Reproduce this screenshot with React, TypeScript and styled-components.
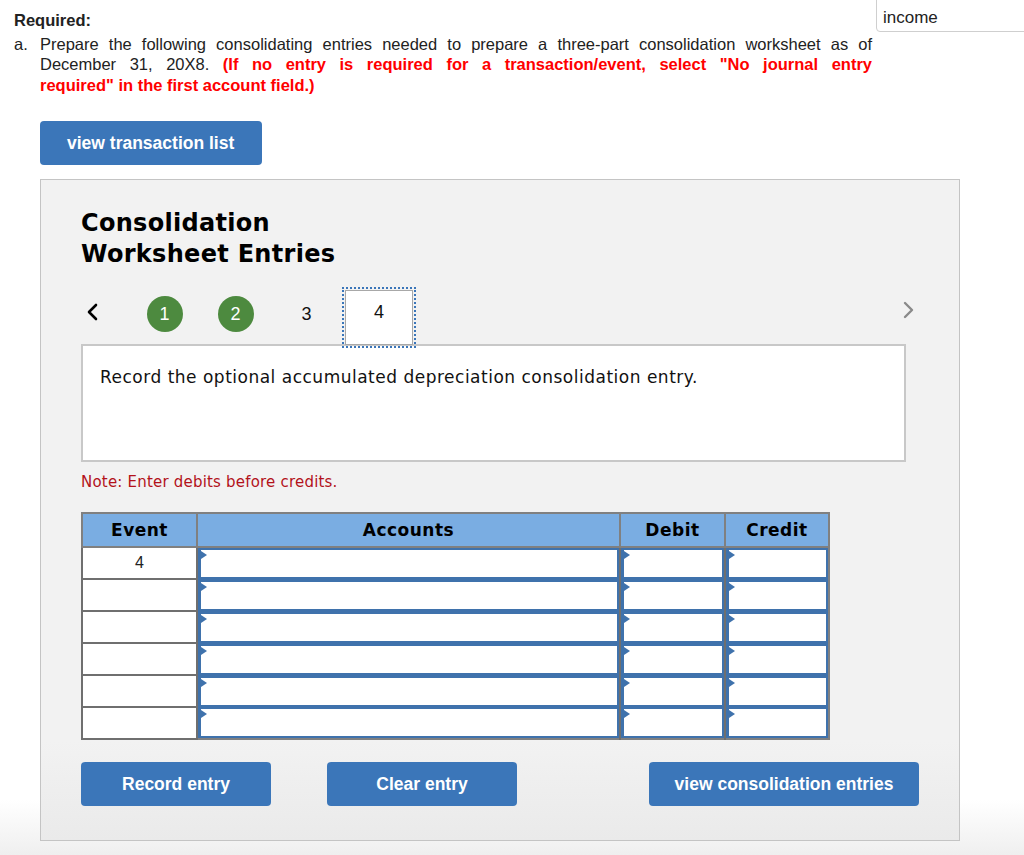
import styled, { createGlobalStyle } from "styled-components";

const GlobalStyle = createGlobalStyle`
  html, body {
    margin: 0;
    padding: 0;
  }
  body {
    font-family: "Liberation Sans", Arial, sans-serif;
    color: #222;
    min-height: 855px;
    background: linear-gradient(180deg, #fff 0px, #fff 800px, #efefef 855px);
  }
`;

const Page = styled.div`
  position: relative;
  padding: 10px 0 0 14px;
  width: 1010px;
  height: 845px;
`;

const IncomeBox = styled.div`
  position: absolute;
  top: -4px;
  right: -12px;
  width: 160px;
  height: 36px;
  padding: 12px 0 0 6px;
  background: #fff;
  border: 1px solid #cfcfcf;
  border-radius: 4px;
  font-size: 17px;
  color: #222;
  box-sizing: border-box;
  line-height: 17px;
`;

const Instructions = styled.div`
  width: 858px;
  font-size: 16.5px;
  line-height: 20.5px;
`;

const Required = styled.div`
  font-weight: bold;
  margin-bottom: 3px;
`;

const Item = styled.div`
  display: flex;
`;

const ItemLabel = styled.span`
  width: 26px;
  flex-shrink: 0;
`;

const ItemText = styled.div`
  flex: 1;
`;

const Line = styled.div<{ $last?: boolean }>`
  white-space: nowrap;
  text-align: ${(p) => (p.$last ? "left" : "justify")};
  text-align-last: ${(p) => (p.$last ? "left" : "justify")};
`;

const Warn = styled.span`
  color: #f00;
  font-weight: bold;
`;

const BlueButton = styled.button<{ $w: number }>`
  width: ${(p) => p.$w}px;
  height: 44px;
  border: none;
  border-radius: 4px;
  background: #3b76b9;
  color: #fff;
  font-family: "Liberation Sans", Arial, sans-serif;
  font-weight: bold;
  font-size: 17.5px;
  padding: 0;
  cursor: pointer;
`;

const TopButton = styled(BlueButton)`
  margin: 26px 0 0 26px;
  text-align: left;
  padding-left: 27px;
`;

const Panel = styled.div`
  margin: 14px 0 0 26px;
  width: 920px;
  height: 662px;
  box-sizing: border-box;
  border: 1px solid #c4c4c4;
  background: linear-gradient(180deg, #f2f2f2 0%, #f2f2f2 85%, #eaeaea 100%);
  padding: 28px 40px 0 40px;
  font-family: "DejaVu Sans", Verdana, sans-serif;
`;

const Title = styled.h2`
  margin: 0;
  font-size: 24px;
  line-height: 31px;
  font-weight: bold;
  color: #000;
  letter-spacing: 0.3px;
`;

const NavRow = styled.div`
  display: flex;
  align-items: flex-start;
  height: 57px;
  margin-top: 17px;
`;

const Chevron = styled.div<{ $muted?: boolean }>`
  width: 48px;
  margin-top: 13px;
  display: flex;
  align-items: center;
  color: ${(p) => (p.$muted ? "#8a8a8a" : "#000")};
`;

const Step = styled.div<{ $done?: boolean }>`
  width: 71px;
  margin-top: 9px;
  display: flex;
  justify-content: center;
  align-items: center;

  span {
    width: 36px;
    height: 36px;
    border-radius: 50%;
    display: flex;
    align-items: center;
    justify-content: center;
    background: ${(p) => (p.$done ? "#4d8a3f" : "transparent")};
    color: ${(p) => (p.$done ? "#fff" : "#111")};
    font-family: "Liberation Sans", Arial, sans-serif;
    font-size: 18px;
  }
`;

const ActiveStep = styled.div`
  width: 74px;
  height: 61px;
  margin-top: 0px;
  position: relative;
  z-index: 1;
  box-sizing: border-box;
  border: 2px dotted #3b76b9;
  display: flex;
  align-items: center;
  justify-content: center;

  span {
    width: 68px;
    height: 55px;
    box-sizing: border-box;
    border: 1px solid #a8a8a8;
    background: #fff;
    display: flex;
    align-items: center;
    justify-content: center;
    font-family: "Liberation Sans", Arial, sans-serif;
    font-size: 18px;
    color: #111;
    padding-bottom: 10px;
  }
`;

const Spacer = styled.div`
  flex: 1;
`;

const NextChevron = styled(Chevron)`
  width: 24px;
  margin-top: 11px;
`;

const Prompt = styled.div`
  width: 825px;
  height: 118px;
  box-sizing: border-box;
  background: #fff;
  border: 2px solid #c8c8c8;
  padding: 19px 0 0 17px;
  font-size: 17px;
  letter-spacing: 0.5px;
  line-height: 24px;
  color: #111;
`;

const Note = styled.div`
  margin-top: 10px;
  font-size: 15px;
  letter-spacing: 0.2px;
  line-height: 20px;
  color: #b3121b;
`;

const Table = styled.table`
  margin-top: 20px;
  border-collapse: collapse;
  table-layout: fixed;
  border: 2px solid #808080;
`;

const HeadCell = styled.th<{ $w: number }>`
  width: ${(p) => p.$w}px;
  height: 32px;
  padding: 0;
  background: #7aade2;
  border: 2px solid #808080;
  font-size: 17px;
  letter-spacing: 0.5px;
  font-weight: bold;
  color: #000;
  text-align: center;
`;

const EventCell = styled.td`
  height: 30px;
  padding: 0;
  background: #fff;
  border: 2px solid #6f6f6f;
  text-align: center;
  font-family: "Liberation Sans", Arial, sans-serif;
  font-size: 16px;
  color: #222;
`;

const InputCell = styled.td`
  height: 30px;
  padding: 0;
  border: none;
  border-left: 2px solid #6f6f6f;
  background: #3f72ac;
`;

const Field = styled.div`
  position: relative;
  height: 27px;
  margin: 2px;
  background: #fff;
  border-left: 1px solid #3f72ac;

  &::before {
    content: "";
    position: absolute;
    left: 0;
    top: 1px;
    border-top: 4px solid transparent;
    border-bottom: 4px solid transparent;
    border-left: 6px solid #3f72ac;
  }
`;

const ButtonRow = styled.div`
  display: flex;
  margin-top: 22px;
`;

const Gap = styled.div<{ $w: number }>`
  width: ${(p) => p.$w}px;
`;

const rows = ["4", "", "", "", "", ""];

const App = () => {
  return (
    <>
      <GlobalStyle />
      <Page>
        <IncomeBox>income</IncomeBox>
        <Instructions>
          <Required>Required:</Required>
          <Item>
            <ItemLabel>a.</ItemLabel>
            <ItemText>
              <Line>
                Prepare the following consolidating entries needed to prepare a
                three-part consolidation worksheet as of
              </Line>
              <Line>
                December 31, 20X8.{" "}
                <Warn>(If no entry is required for a transaction/event, select "No journal entry</Warn>
              </Line>
              <Line $last>
                <Warn>required" in the first account field.)</Warn>
              </Line>
            </ItemText>
          </Item>
        </Instructions>

        <TopButton $w={222}>view transaction list</TopButton>

        <Panel>
          <Title>
            Consolidation
            <br />
            Worksheet Entries
          </Title>

          <NavRow>
            <Chevron>
              <svg width="24" height="24" viewBox="0 0 24 24" fill="none">
                <path d="M15 5 L8 12 L15 19" stroke="#000" strokeWidth="2.6" strokeLinecap="round" strokeLinejoin="round" />
              </svg>
            </Chevron>
            <Step $done>
              <span>1</span>
            </Step>
            <Step $done>
              <span>2</span>
            </Step>
            <Step>
              <span>3</span>
            </Step>
            <ActiveStep>
              <span>4</span>
            </ActiveStep>
            <Spacer />
            <NextChevron $muted>
              <svg width="24" height="24" viewBox="0 0 24 24" fill="none">
                <path d="M10 5 L17 12 L10 19" stroke="#8a8a8a" strokeWidth="2.4" strokeLinecap="round" strokeLinejoin="round" />
              </svg>
            </NextChevron>
          </NavRow>

          <Prompt>Record the optional accumulated depreciation consolidation entry.</Prompt>

          <Note>Note: Enter debits before credits.</Note>

          <Table>
            <thead>
              <tr>
                <HeadCell $w={113}>Event</HeadCell>
                <HeadCell $w={421}>Accounts</HeadCell>
                <HeadCell $w={103}>Debit</HeadCell>
                <HeadCell $w={102}>Credit</HeadCell>
              </tr>
            </thead>
            <tbody>
              {rows.map((ev, i) => (
                <tr key={i}>
                  <EventCell>{ev}</EventCell>
                  <InputCell>
                    <Field />
                  </InputCell>
                  <InputCell>
                    <Field />
                  </InputCell>
                  <InputCell>
                    <Field />
                  </InputCell>
                </tr>
              ))}
            </tbody>
          </Table>

          <ButtonRow>
            <BlueButton $w={190}>Record entry</BlueButton>
            <Gap $w={56} />
            <BlueButton $w={190}>Clear entry</BlueButton>
            <Spacer />
            <BlueButton $w={270}>view consolidation entries</BlueButton>
          </ButtonRow>
        </Panel>
      </Page>
    </>
  );
};

export default App;
